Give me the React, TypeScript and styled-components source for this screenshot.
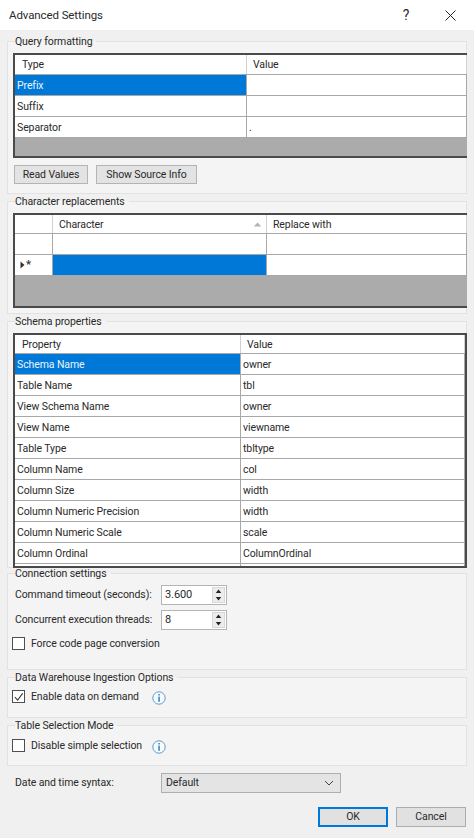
import styled, { createGlobalStyle } from "styled-components";

const queryRows = [
  ["Prefix", ""],
  ["Suffix", ""],
  ["Separator", "."],
];

const schemaRows = [
  ["Schema Name", "owner"],
  ["Table Name", "tbl"],
  ["View Schema Name", "owner"],
  ["View Name", "viewname"],
  ["Table Type", "tbltype"],
  ["Column Name", "col"],
  ["Column Size", "width"],
  ["Column Numeric Precision", "width"],
  ["Column Numeric Scale", "scale"],
  ["Column Ordinal", "ColumnOrdinal"],
];

function InfoIcon() {
  return (
    <InfoSvg viewBox="0 0 14 14">
      <circle cx="7" cy="7" r="6.2" fill="#f7fbfe" stroke="#5b9bd0" strokeWidth="1" />
      <rect x="6.3" y="3" width="1.5" height="1.5" fill="#2f7fc0" />
      <rect x="6.3" y="5.6" width="1.5" height="5.2" fill="#2f7fc0" />
    </InfoSvg>
  );
}

function Spinner({ value }: { value: string }) {
  return (
    <SpinBox>
      <SpinValue>{value}</SpinValue>
      <SpinButtons>
        <SpinArrow viewBox="0 0 12 9">
          <path d="M6 2 L9.5 6.5 L2.5 6.5 Z" fill="#222" />
        </SpinArrow>
        <SpinArrow viewBox="0 0 12 9">
          <path d="M6 7 L9.5 2.5 L2.5 2.5 Z" fill="#222" />
        </SpinArrow>
      </SpinButtons>
    </SpinBox>
  );
}

function App() {
  return (
    <Window>
      <GlobalStyle />
      <TitleBar>
        <Title>Advanced Settings</Title>
        <Help>?</Help>
        <CloseIcon viewBox="0 0 11 11">
          <path d="M0.5 0.5 L10.5 10.5 M10.5 0.5 L0.5 10.5" stroke="#222" strokeWidth="1" fill="none" />
        </CloseIcon>
      </TitleBar>

      <Body>
        <Group $height={160}>
          <Legend>Query formatting</Legend>
          <Grid $height={105} $open>
            <Header $columns="232px 1fr" $height={20}>
              <HeadCell $indent={1}>Type</HeadCell>
              <HeadCell>Value</HeadCell>
            </Header>
            {queryRows.map(([name, value], index) => (
              <Row key={name} $columns="232px 1fr">
                <Cell $selected={index === 0}>{name}</Cell>
                <Cell>{value}</Cell>
              </Row>
            ))}
            <EmptyArea />
          </Grid>
          <ButtonRow>
            <ToolButton $width={74}>Read Values</ToolButton>
            <ToolButton $width={101}>Show Source Info</ToolButton>
          </ButtonRow>
        </Group>

        <Group $height={120}>
          <Legend>Character replacements</Legend>
          <Grid $height={95} $open>
            <Header $columns="38px 214px 1fr">
              <HeadCell />
              <HeadCell $sorted>
                Character
                <SortArrow viewBox="0 0 10 6">
                  <path d="M5 0.5 L9.5 5.5 L0.5 5.5 Z" fill="#b4b4b4" />
                </SortArrow>
              </HeadCell>
              <HeadCell>Replace with</HeadCell>
            </Header>
            <Row $columns="38px 214px 1fr">
              <Cell />
              <Cell />
              <Cell />
            </Row>
            <Row $columns="38px 214px 1fr">
              <RowMarker>
                <MarkerArrow viewBox="0 0 5 8">
                  <path d="M0.5 0.5 L4.5 4 L0.5 7.5 Z" fill="#333" />
                </MarkerArrow>
                *
              </RowMarker>
              <Cell $selected />
              <Cell />
            </Row>
            <EmptyArea />
          </Grid>
        </Group>

        <Group $height={254}>
          <Legend>Schema properties</Legend>
          <Grid $height={235}>
            <Header $columns="226px 1fr">
              <HeadCell $indent={1}>Property</HeadCell>
              <HeadCell>Value</HeadCell>
            </Header>
            {schemaRows.map(([name, value], index) => (
              <Row key={name} $columns="226px 1fr">
                <Cell $selected={index === 0}>{name}</Cell>
                <Cell>{value}</Cell>
              </Row>
            ))}
            <Row $columns="226px 1fr">
              <Cell />
              <Cell />
            </Row>
          </Grid>
        </Group>

        <Group $height={104} $overlap={2}>
          <Legend>Connection settings</Legend>
          <FieldRow>
            <FieldLabel>Command timeout (seconds):</FieldLabel>
            <Spinner value="3.600" />
          </FieldRow>
          <FieldRow>
            <FieldLabel>Concurrent execution threads:</FieldLabel>
            <Spinner value="8" />
          </FieldRow>
          <CheckRow>
            <CheckBox />
            <CheckLabel>Force code page conversion</CheckLabel>
          </CheckRow>
        </Group>

        <Group $height={48} $pad={4}>
          <Legend>Data Warehouse Ingestion Options</Legend>
          <CheckRow>
            <CheckBox>
              <svg viewBox="0 0 12 12" width="12" height="12">
                <path d="M2 6 L5 9.5 L10.5 2" stroke="#333" strokeWidth="1.2" fill="none" />
              </svg>
            </CheckBox>
            <CheckLabel>Enable data on demand</CheckLabel>
            <InfoIcon />
          </CheckRow>
        </Group>

        <Group $height={48}>
          <Legend>Table Selection Mode</Legend>
          <CheckRow>
            <CheckBox />
            <CheckLabel>Disable simple selection</CheckLabel>
            <InfoIcon />
          </CheckRow>
        </Group>

        <SyntaxRow>
          <FieldLabel>Date and time syntax:</FieldLabel>
          <Select>
            Default
            <svg viewBox="0 0 10 6" width="10" height="6">
              <path d="M1 1 L5 5 L9 1" stroke="#444" strokeWidth="1" fill="none" />
            </svg>
          </Select>
        </SyntaxRow>

        <Footer>
          <DialogButton $primary>OK</DialogButton>
          <DialogButton>Cancel</DialogButton>
        </Footer>
      </Body>
    </Window>
  );
}

const GlobalStyle = createGlobalStyle`
  html, body {
    margin: 0;
    padding: 0;
    background: #f0f0f0;
  }
  * {
    box-sizing: border-box;
  }
`;

const Window = styled.div`
  width: 474px;
  height: 838px;
  overflow: hidden;
  background: #f0f0f0;
  color: #2a2a2a;
  font-family: Roboto, "Liberation Sans", sans-serif;
  font-size: 10.5px;
  letter-spacing: -0.1px;
  line-height: 16px;
`;

const TitleBar = styled.div`
  height: 30px;
  display: flex;
  align-items: center;
  padding: 0 18px 0 9px;
  background: #fff;
`;

const Title = styled.div`
  flex: 1;
  font-size: 11.5px;
`;

const Help = styled.div`
  width: 12px;
  margin-right: 33px;
  font-size: 14px;
  text-align: center;
`;

const CloseIcon = styled.svg`
  width: 11px;
  height: 11px;
`;

const Body = styled.div`
  padding: 4px 7px 0 7px;
`;

const Group = styled.fieldset<{ $height: number; $pad?: number; $overlap?: number }>`
  height: ${(props) => props.$height}px;
  margin: ${(props) => -(props.$overlap ?? 0)}px 0 0;
  padding: ${(props) => props.$pad ?? 5}px 0 0 5px;
  border: 1px solid #e2e2e2;
  background: #f4f4f4;
  min-width: 0;
`;

const Legend = styled.legend`
  margin-left: 2px;
  padding: 0;
  padding-right: 4px;
  line-height: 16px;
  height: 14px;
`;

const Grid = styled.div<{ $height: number; $open?: boolean }>`
  height: ${(props) => props.$height}px;
  margin-right: -1px;
  display: flex;
  flex-direction: column;
  overflow: hidden;
  background: #fff;
  border: 2px solid #4a4a4a;
  border-right: ${(props) => (props.$open ? "none" : "2px solid #4a4a4a")};
`;

const Header = styled.div<{ $columns: string; $height?: number }>`
  flex: none;
  height: ${(props) => props.$height ?? 19}px;
  display: grid;
  grid-template-columns: ${(props) => props.$columns};
  border-bottom: 1px solid #a8a8a8;
`;

const HeadCell = styled.div<{ $indent?: number; $sorted?: boolean }>`
  display: flex;
  align-items: center;
  justify-content: ${(props) => (props.$sorted ? "space-between" : "flex-start")};
  padding: 1px ${(props) => (props.$sorted ? 4 : 0)}px 0 ${(props) => 6 + (props.$indent ?? 0)}px;
  border-right: 1px solid #d0d0d0;
  white-space: nowrap;
`;

const SortArrow = styled.svg`
  width: 9px;
  height: 5px;
`;

const Row = styled.div<{ $columns: string }>`
  flex: none;
  height: 21px;
  display: grid;
  grid-template-columns: ${(props) => props.$columns};
  grid-template-rows: 20px;
  border-bottom: 1px solid #a8a8a8;
`;

const Cell = styled.div<{ $selected?: boolean }>`
  padding: 3px 2px 0;
  line-height: 16px;
  white-space: nowrap;
  border-right: 1px solid #a8a8a8;
  background: ${(props) => (props.$selected ? "#0078d7" : "#fff")};
  color: ${(props) => (props.$selected ? "#e8f4ff" : "#2a2a2a")};
`;

const RowMarker = styled.div`
  display: flex;
  align-items: center;
  padding-left: 5px;
  gap: 1px;
  font-size: 11px;
  font-weight: 700;
  color: #333;
  border-right: 1px solid #a8a8a8;
`;

const MarkerArrow = styled.svg`
  width: 5px;
  height: 8px;
`;

const EmptyArea = styled.div`
  flex: 1;
  background: #ababab;
`;

const ButtonRow = styled.div`
  display: flex;
  gap: 8px;
  margin: 7px 0 0 1px;
`;

const ToolButton = styled.div<{ $width: number }>`
  width: ${(props) => props.$width}px;
  height: 19px;
  display: flex;
  align-items: center;
  justify-content: center;
  white-space: nowrap;
  background: #e3e3e3;
  border: 1px solid #b4b4b4;
`;

const FieldRow = styled.div`
  height: 20px;
  margin-bottom: 5px;
  display: flex;
  align-items: center;
  padding-left: 2px;
`;

const FieldLabel = styled.div`
  width: 146px;
  flex: none;
  white-space: nowrap;
`;

const SpinBox = styled.div`
  width: 66px;
  height: 20px;
  display: flex;
  align-items: center;
  justify-content: space-between;
  padding: 0 1px 0 3px;
  background: #fff;
  border: 1px solid #b4b4b4;
`;

const SpinValue = styled.span`
  font-size: 11px;
`;

const SpinButtons = styled.div`
  width: 13px;
  height: 16px;
  display: flex;
  flex-direction: column;
  background: #ececec;
  border: 1px solid #d8d8d8;
`;

const SpinArrow = styled.svg`
  width: 11px;
  height: 7px;
`;

const CheckRow = styled.div`
  height: 17px;
  display: flex;
  align-items: center;
  margin-left: -1px;
`;

const CheckBox = styled.div`
  width: 13px;
  height: 13px;
  flex: none;
  display: flex;
  align-items: center;
  justify-content: center;
  background: #fff;
  border: 1px solid #4f4f4f;
`;

const CheckLabel = styled.span`
  width: 121px;
  margin-left: 6px;
  white-space: nowrap;
`;

const InfoSvg = styled.svg`
  width: 14px;
  height: 14px;
  margin-top: 3px;
`;

const SyntaxRow = styled.div`
  display: flex;
  align-items: center;
  margin-top: 7px;
  padding-left: 8px;
`;

const Select = styled.div`
  width: 180px;
  height: 20px;
  display: flex;
  align-items: center;
  justify-content: space-between;
  padding: 0 6px 0 4px;
  background: #e4e4e4;
  border: 1px solid #aeaeae;
`;

const Footer = styled.div`
  display: flex;
  justify-content: flex-end;
  gap: 8px;
  margin: 14px 1px 0 0;
`;

const DialogButton = styled.div<{ $primary?: boolean }>`
  width: 70px;
  height: 20px;
  display: flex;
  align-items: center;
  justify-content: center;
  background: #e1e1e1;
  border: ${(props) => (props.$primary ? "2px solid #0078d7" : "1px solid #adadad")};
`;

export default App;
